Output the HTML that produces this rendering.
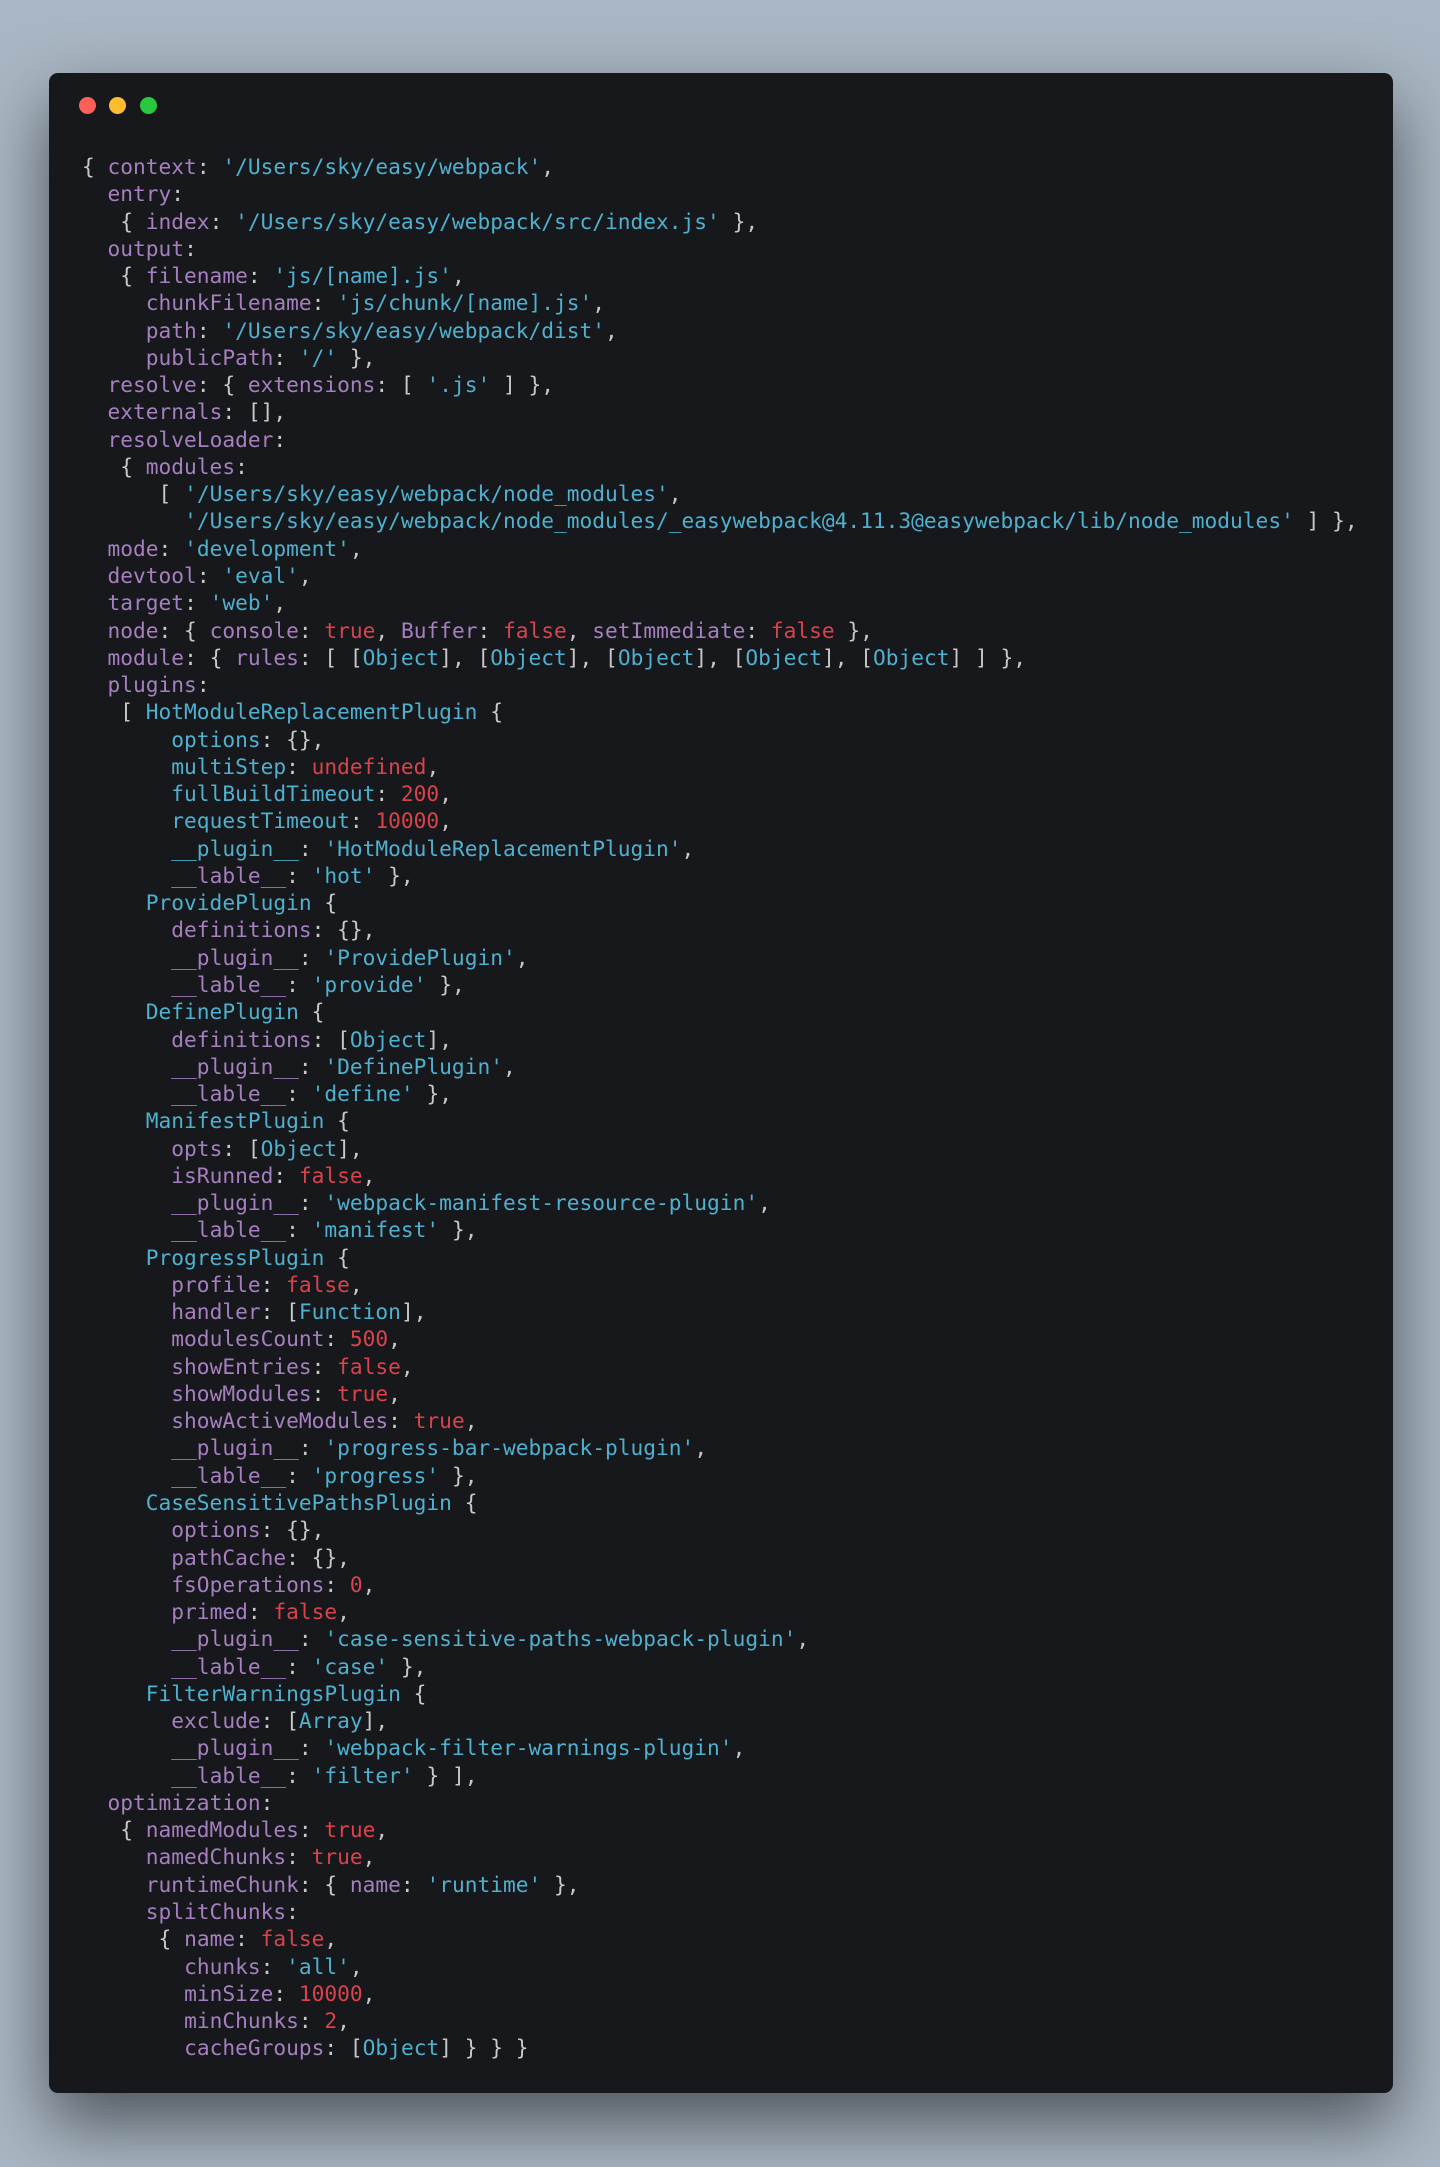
<!DOCTYPE html>
<html><head><meta charset="utf-8">
<style>
html,body{margin:0;padding:0;}
body{width:1440px;height:2167px;background:#a9b6c3;position:relative;overflow:hidden;}
.win{position:absolute;left:49px;top:73px;width:1344px;height:2020px;background:#17181b;border-radius:9px;box-shadow:0 30px 70px rgba(0,0,0,0.55);}
.dot{position:absolute;top:96.5px;width:17px;height:17px;border-radius:50%;}
pre{position:absolute;left:82px;top:153px;margin:0;font-family:"DejaVu Sans Mono","Liberation Mono",monospace;font-size:21.2px;line-height:27.26px;color:#c8c8c8;}
.k{color:#a57fbf}.s{color:#4fb0cf}.n{color:#d9434b}
</style></head><body>
<div class="win"></div>
<div class="dot" style="left:78.5px;background:#fe5f57"></div>
<div class="dot" style="left:108.5px;background:#febc2e"></div>
<div class="dot" style="left:139.5px;background:#28c840"></div>
<pre>{ <span class="k">context</span>: <span class="s">'/Users/sky/easy/webpack'</span>,
  <span class="k">entry</span>:
   { <span class="k">index</span>: <span class="s">'/Users/sky/easy/webpack/src/index.js'</span> },
  <span class="k">output</span>:
   { <span class="k">filename</span>: <span class="s">'js/[name].js'</span>,
     <span class="k">chunkFilename</span>: <span class="s">'js/chunk/[name].js'</span>,
     <span class="k">path</span>: <span class="s">'/Users/sky/easy/webpack/dist'</span>,
     <span class="k">publicPath</span>: <span class="s">'/'</span> },
  <span class="k">resolve</span>: { <span class="k">extensions</span>: [ <span class="s">'.js'</span> ] },
  <span class="k">externals</span>: [],
  <span class="k">resolveLoader</span>:
   { <span class="k">modules</span>:
      [ <span class="s">'/Users/sky/easy/webpack/node_modules'</span>,
        <span class="s">'/Users/sky/easy/webpack/node_modules/_easywebpack@4.11.3@easywebpack/lib/node_modules'</span> ] },
  <span class="k">mode</span>: <span class="s">'development'</span>,
  <span class="k">devtool</span>: <span class="s">'eval'</span>,
  <span class="k">target</span>: <span class="s">'web'</span>,
  <span class="k">node</span>: { <span class="k">console</span>: <span class="n">true</span>, <span class="k">Buffer</span>: <span class="n">false</span>, <span class="k">setImmediate</span>: <span class="n">false</span> },
  <span class="k">module</span>: { <span class="k">rules</span>: [ [<span class="s">Object</span>], [<span class="s">Object</span>], [<span class="s">Object</span>], [<span class="s">Object</span>], [<span class="s">Object</span>] ] },
  <span class="k">plugins</span>:
   [ <span class="s">HotModuleReplacementPlugin</span> {
       <span class="s">options</span>: {},
       <span class="s">multiStep</span>: <span class="n">undefined</span>,
       <span class="s">fullBuildTimeout</span>: <span class="n">200</span>,
       <span class="s">requestTimeout</span>: <span class="n">10000</span>,
       <span class="s">__plugin__</span>: <span class="s">'HotModuleReplacementPlugin'</span>,
       <span class="k">__lable__</span>: <span class="s">'hot'</span> },
     <span class="s">ProvidePlugin</span> {
       <span class="k">definitions</span>: {},
       <span class="k">__plugin__</span>: <span class="s">'ProvidePlugin'</span>,
       <span class="k">__lable__</span>: <span class="s">'provide'</span> },
     <span class="s">DefinePlugin</span> {
       <span class="k">definitions</span>: [<span class="s">Object</span>],
       <span class="k">__plugin__</span>: <span class="s">'DefinePlugin'</span>,
       <span class="k">__lable__</span>: <span class="s">'define'</span> },
     <span class="s">ManifestPlugin</span> {
       <span class="k">opts</span>: [<span class="s">Object</span>],
       <span class="k">isRunned</span>: <span class="n">false</span>,
       <span class="k">__plugin__</span>: <span class="s">'webpack-manifest-resource-plugin'</span>,
       <span class="k">__lable__</span>: <span class="s">'manifest'</span> },
     <span class="s">ProgressPlugin</span> {
       <span class="k">profile</span>: <span class="n">false</span>,
       <span class="k">handler</span>: [<span class="s">Function</span>],
       <span class="k">modulesCount</span>: <span class="n">500</span>,
       <span class="k">showEntries</span>: <span class="n">false</span>,
       <span class="k">showModules</span>: <span class="n">true</span>,
       <span class="k">showActiveModules</span>: <span class="n">true</span>,
       <span class="k">__plugin__</span>: <span class="s">'progress-bar-webpack-plugin'</span>,
       <span class="k">__lable__</span>: <span class="s">'progress'</span> },
     <span class="s">CaseSensitivePathsPlugin</span> {
       <span class="k">options</span>: {},
       <span class="k">pathCache</span>: {},
       <span class="k">fsOperations</span>: <span class="n">0</span>,
       <span class="k">primed</span>: <span class="n">false</span>,
       <span class="k">__plugin__</span>: <span class="s">'case-sensitive-paths-webpack-plugin'</span>,
       <span class="k">__lable__</span>: <span class="s">'case'</span> },
     <span class="s">FilterWarningsPlugin</span> {
       <span class="k">exclude</span>: [<span class="s">Array</span>],
       <span class="k">__plugin__</span>: <span class="s">'webpack-filter-warnings-plugin'</span>,
       <span class="k">__lable__</span>: <span class="s">'filter'</span> } ],
  <span class="k">optimization</span>:
   { <span class="k">namedModules</span>: <span class="n">true</span>,
     <span class="k">namedChunks</span>: <span class="n">true</span>,
     <span class="k">runtimeChunk</span>: { <span class="k">name</span>: <span class="s">'runtime'</span> },
     <span class="k">splitChunks</span>:
      { <span class="k">name</span>: <span class="n">false</span>,
        <span class="k">chunks</span>: <span class="s">'all'</span>,
        <span class="k">minSize</span>: <span class="n">10000</span>,
        <span class="k">minChunks</span>: <span class="n">2</span>,
        <span class="k">cacheGroups</span>: [<span class="s">Object</span>] } } }</pre>
</body></html>
